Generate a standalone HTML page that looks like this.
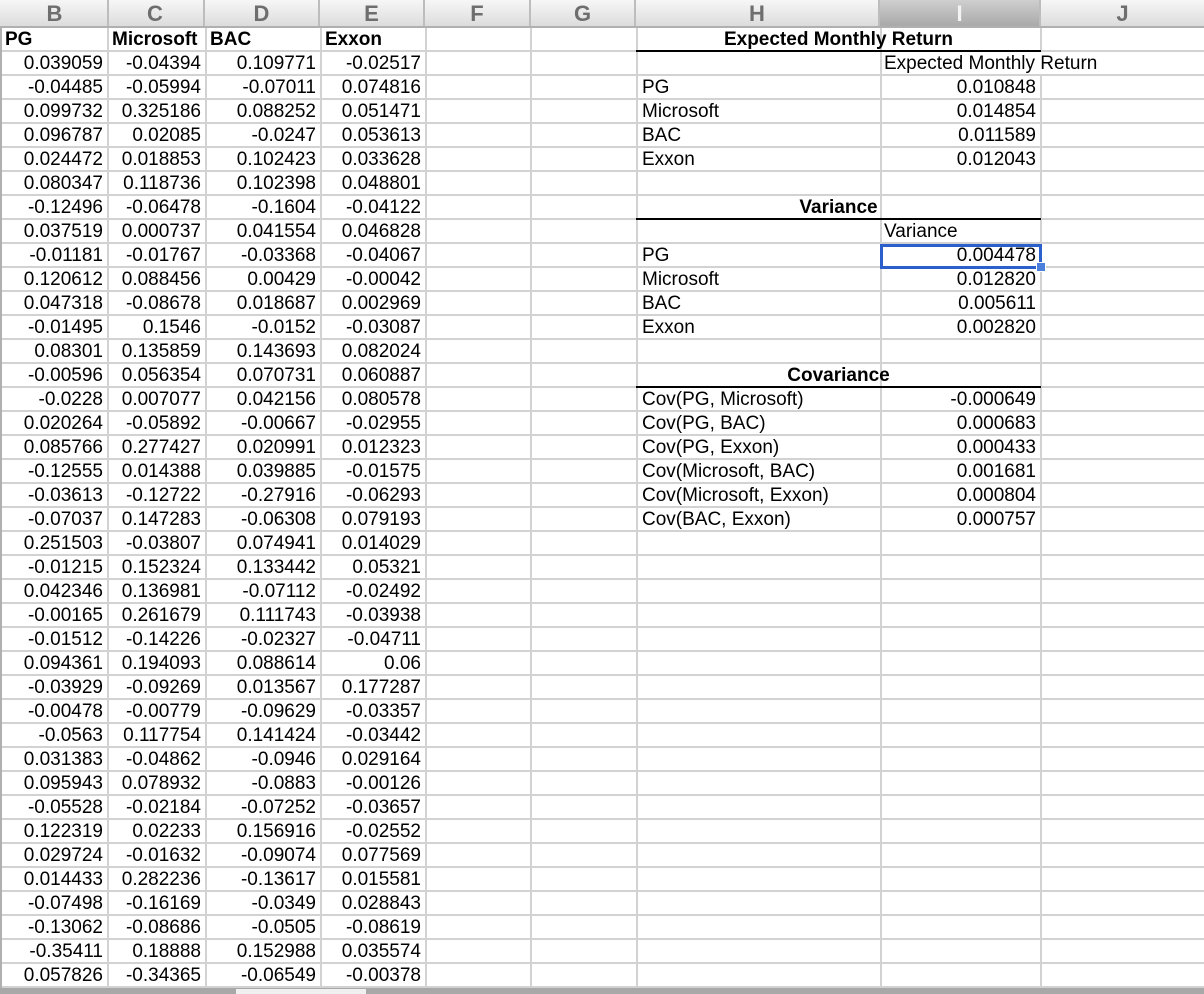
<!DOCTYPE html>
<html><head><meta charset="utf-8"><style>
*{margin:0;padding:0;box-sizing:border-box}
body{width:1204px;height:994px;overflow:hidden;background:#fff;font-family:"Liberation Sans",Arial,sans-serif;position:relative}
.hdr{position:absolute;top:0;left:0;width:1204px;height:28px;background:linear-gradient(#f7f7f7,#dcdcdc);border-bottom:2px solid #b0b0b0;z-index:5}
.hdr div{position:absolute;top:0;height:26px;line-height:27px;text-align:center;font-weight:bold;font-size:22px;color:#6e6e6e;border-right:2px solid #bdbdbd}
.grid{position:absolute;top:28px;left:0;width:1204px;height:960px;background:repeating-linear-gradient(to bottom,transparent 0,transparent 22px,#d2d2d2 22px,#d2d2d2 24px);z-index:1}
.v{position:absolute;top:28px;height:960px;width:2px;background:#d2d2d2;z-index:2}
.rows{position:absolute;top:28px;left:0;z-index:4}
.r{height:24px;line-height:23px;font-size:19px;white-space:nowrap;display:flex}
.r i{font-style:normal;display:block;text-align:right;padding-right:4px}
.r i:nth-child(1){width:107px}.r i:nth-child(2){width:98px}.r i:nth-child(3){width:115px}.r i:nth-child(4){width:105px}
.h i{text-align:left;padding-left:5px;font-weight:bold}
.t{position:absolute;font-size:19px;line-height:23px;white-space:nowrap;z-index:4}
.wb{position:absolute;background:#fff;z-index:3}
.bb{position:absolute;left:636px;width:405px;height:2px;background:#000;z-index:3}
</style></head><body>
<div class="hdr">
<div style="left:2px;width:107px">B</div><div style="left:107px;width:98px">C</div><div style="left:205px;width:115px">D</div><div style="left:320px;width:105px">E</div><div style="left:425px;width:106px">F</div><div style="left:531px;width:105px">G</div><div style="left:636px;width:244px">H</div><div style="left:880px;width:161px;background:linear-gradient(#cfcfcf,#a9a9a9);color:#f4f4f4">I</div><div style="left:1041px;width:163px;border-right:none">J</div>
</div>
<div class="grid"></div>
<div class="v" style="left:0;background:#b0b0b0"></div>
<div class="v" style="left:107px"></div><div class="v" style="left:205px"></div><div class="v" style="left:320px"></div><div class="v" style="left:425px"></div><div class="v" style="left:530px"></div><div class="v" style="left:636px"></div><div class="v" style="left:880px"></div><div class="v" style="left:1040px"></div>
<div class="wb" style="left:882px;top:28px;width:157px;height:22px"></div>
<div class="wb" style="left:882px;top:52px;width:321px;height:22px"></div>
<div class="wb" style="left:882px;top:172px;width:157px;height:22px"></div>
<div class="wb" style="left:882px;top:196px;width:157px;height:22px"></div>
<div class="wb" style="left:882px;top:340px;width:157px;height:22px"></div>
<div class="wb" style="left:882px;top:364px;width:157px;height:22px"></div>
<div class="wb" style="left:882px;top:556px;width:157px;height:22px"></div>
<div class="bb" style="top:50px"></div><div class="bb" style="top:218px"></div><div class="bb" style="top:386px"></div>
<div class="rows">
<div class="r h"><i>PG</i><i>Microsoft</i><i>BAC</i><i>Exxon</i></div>
<div class="r"><i>0.039059</i><i>-0.04394</i><i>0.109771</i><i>-0.02517</i></div>
<div class="r"><i>-0.04485</i><i>-0.05994</i><i>-0.07011</i><i>0.074816</i></div>
<div class="r"><i>0.099732</i><i>0.325186</i><i>0.088252</i><i>0.051471</i></div>
<div class="r"><i>0.096787</i><i>0.02085</i><i>-0.0247</i><i>0.053613</i></div>
<div class="r"><i>0.024472</i><i>0.018853</i><i>0.102423</i><i>0.033628</i></div>
<div class="r"><i>0.080347</i><i>0.118736</i><i>0.102398</i><i>0.048801</i></div>
<div class="r"><i>-0.12496</i><i>-0.06478</i><i>-0.1604</i><i>-0.04122</i></div>
<div class="r"><i>0.037519</i><i>0.000737</i><i>0.041554</i><i>0.046828</i></div>
<div class="r"><i>-0.01181</i><i>-0.01767</i><i>-0.03368</i><i>-0.04067</i></div>
<div class="r"><i>0.120612</i><i>0.088456</i><i>0.00429</i><i>-0.00042</i></div>
<div class="r"><i>0.047318</i><i>-0.08678</i><i>0.018687</i><i>0.002969</i></div>
<div class="r"><i>-0.01495</i><i>0.1546</i><i>-0.0152</i><i>-0.03087</i></div>
<div class="r"><i>0.08301</i><i>0.135859</i><i>0.143693</i><i>0.082024</i></div>
<div class="r"><i>-0.00596</i><i>0.056354</i><i>0.070731</i><i>0.060887</i></div>
<div class="r"><i>-0.0228</i><i>0.007077</i><i>0.042156</i><i>0.080578</i></div>
<div class="r"><i>0.020264</i><i>-0.05892</i><i>-0.00667</i><i>-0.02955</i></div>
<div class="r"><i>0.085766</i><i>0.277427</i><i>0.020991</i><i>0.012323</i></div>
<div class="r"><i>-0.12555</i><i>0.014388</i><i>0.039885</i><i>-0.01575</i></div>
<div class="r"><i>-0.03613</i><i>-0.12722</i><i>-0.27916</i><i>-0.06293</i></div>
<div class="r"><i>-0.07037</i><i>0.147283</i><i>-0.06308</i><i>0.079193</i></div>
<div class="r"><i>0.251503</i><i>-0.03807</i><i>0.074941</i><i>0.014029</i></div>
<div class="r"><i>-0.01215</i><i>0.152324</i><i>0.133442</i><i>0.05321</i></div>
<div class="r"><i>0.042346</i><i>0.136981</i><i>-0.07112</i><i>-0.02492</i></div>
<div class="r"><i>-0.00165</i><i>0.261679</i><i>0.111743</i><i>-0.03938</i></div>
<div class="r"><i>-0.01512</i><i>-0.14226</i><i>-0.02327</i><i>-0.04711</i></div>
<div class="r"><i>0.094361</i><i>0.194093</i><i>0.088614</i><i>0.06</i></div>
<div class="r"><i>-0.03929</i><i>-0.09269</i><i>0.013567</i><i>0.177287</i></div>
<div class="r"><i>-0.00478</i><i>-0.00779</i><i>-0.09629</i><i>-0.03357</i></div>
<div class="r"><i>-0.0563</i><i>0.117754</i><i>0.141424</i><i>-0.03442</i></div>
<div class="r"><i>0.031383</i><i>-0.04862</i><i>-0.0946</i><i>0.029164</i></div>
<div class="r"><i>0.095943</i><i>0.078932</i><i>-0.0883</i><i>-0.00126</i></div>
<div class="r"><i>-0.05528</i><i>-0.02184</i><i>-0.07252</i><i>-0.03657</i></div>
<div class="r"><i>0.122319</i><i>0.02233</i><i>0.156916</i><i>-0.02552</i></div>
<div class="r"><i>0.029724</i><i>-0.01632</i><i>-0.09074</i><i>0.077569</i></div>
<div class="r"><i>0.014433</i><i>0.282236</i><i>-0.13617</i><i>0.015581</i></div>
<div class="r"><i>-0.07498</i><i>-0.16169</i><i>-0.0349</i><i>0.028843</i></div>
<div class="r"><i>-0.13062</i><i>-0.08686</i><i>-0.0505</i><i>-0.08619</i></div>
<div class="r"><i>-0.35411</i><i>0.18888</i><i>0.152988</i><i>0.035574</i></div>
<div class="r"><i>0.057826</i><i>-0.34365</i><i>-0.06549</i><i>-0.00378</i></div>
</div>
<div class="t" style="left:636px;width:405px;top:28px;text-align:center;font-weight:bold">Expected Monthly Return</div>
<div class="t" style="left:884px;top:52px">Expected Monthly Return</div>
<div class="t" style="left:642px;top:76px">PG</div><div class="t" style="left:880px;width:156px;text-align:right;top:76px">0.010848</div>
<div class="t" style="left:642px;top:100px">Microsoft</div><div class="t" style="left:880px;width:156px;text-align:right;top:100px">0.014854</div>
<div class="t" style="left:642px;top:124px">BAC</div><div class="t" style="left:880px;width:156px;text-align:right;top:124px">0.011589</div>
<div class="t" style="left:642px;top:148px">Exxon</div><div class="t" style="left:880px;width:156px;text-align:right;top:148px">0.012043</div>
<div class="t" style="left:636px;width:405px;top:196px;text-align:center;font-weight:bold">Variance</div>
<div class="t" style="left:884px;top:220px">Variance</div>
<div class="t" style="left:642px;top:244px">PG</div><div class="t" style="left:880px;width:156px;text-align:right;top:244px">0.004478</div>
<div class="t" style="left:642px;top:268px">Microsoft</div><div class="t" style="left:880px;width:156px;text-align:right;top:268px">0.012820</div>
<div class="t" style="left:642px;top:292px">BAC</div><div class="t" style="left:880px;width:156px;text-align:right;top:292px">0.005611</div>
<div class="t" style="left:642px;top:316px">Exxon</div><div class="t" style="left:880px;width:156px;text-align:right;top:316px">0.002820</div>
<div class="t" style="left:636px;width:405px;top:364px;text-align:center;font-weight:bold">Covariance</div>
<div class="t" style="left:642px;top:388px">Cov(PG, Microsoft)</div><div class="t" style="left:880px;width:156px;text-align:right;top:388px">-0.000649</div>
<div class="t" style="left:642px;top:412px">Cov(PG, BAC)</div><div class="t" style="left:880px;width:156px;text-align:right;top:412px">0.000683</div>
<div class="t" style="left:642px;top:436px">Cov(PG, Exxon)</div><div class="t" style="left:880px;width:156px;text-align:right;top:436px">0.000433</div>
<div class="t" style="left:642px;top:460px">Cov(Microsoft, BAC)</div><div class="t" style="left:880px;width:156px;text-align:right;top:460px">0.001681</div>
<div class="t" style="left:642px;top:484px">Cov(Microsoft, Exxon)</div><div class="t" style="left:880px;width:156px;text-align:right;top:484px">0.000804</div>
<div class="t" style="left:642px;top:508px">Cov(BAC, Exxon)</div><div class="t" style="left:880px;width:156px;text-align:right;top:508px">0.000757</div>
<div style="position:absolute;left:880px;top:244px;width:162px;height:25px;border:3px solid #2a5fcc;z-index:6"></div>
<div style="position:absolute;left:1036px;top:262px;width:10px;height:10px;background:#4a7fdc;border:1px solid #fff;z-index:7"></div>
<div style="position:absolute;left:0;top:988px;width:1204px;height:6px;background:#a8a8a8;z-index:6"></div>
<div style="position:absolute;left:236px;top:989px;width:130px;height:5px;background:#f0f0f0;z-index:7"></div>
</body></html>
